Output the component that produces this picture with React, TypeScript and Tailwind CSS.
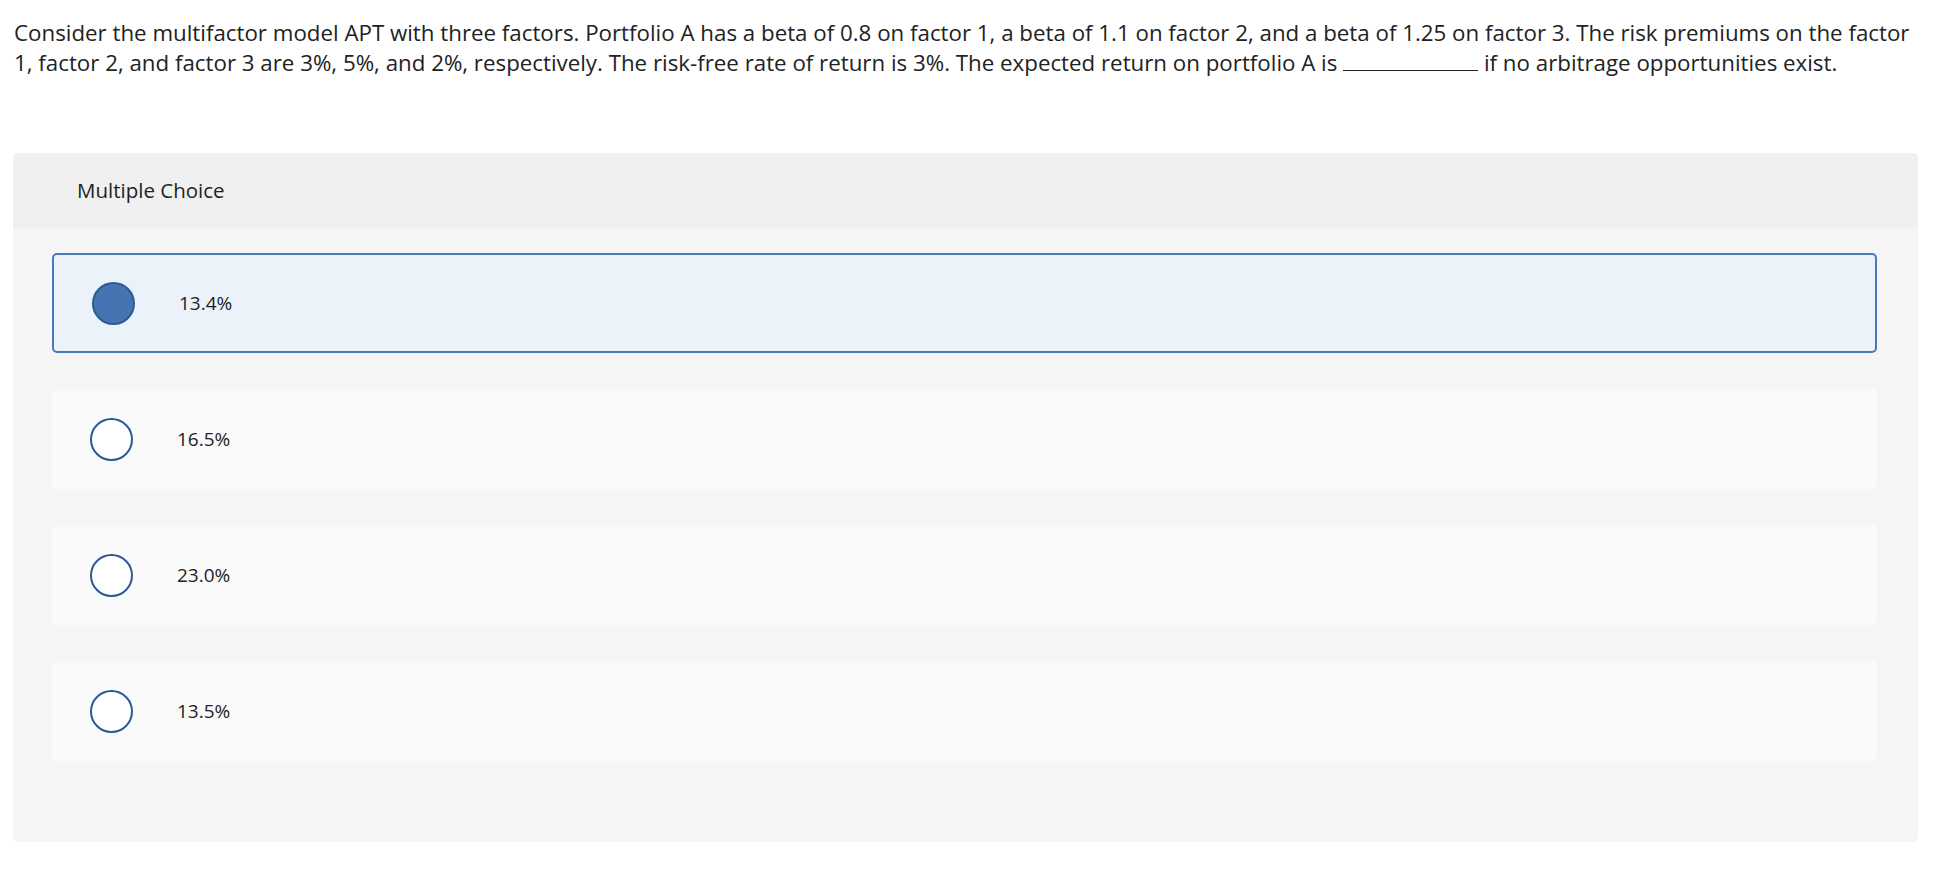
const options = [
  { label: "13.4%", selected: true },
  { label: "16.5%", selected: false },
  { label: "23.0%", selected: false },
  { label: "13.5%", selected: false },
]

function Radio({ checked }: { checked: boolean }) {
  return (
    <span
      className={
        "block h-[43px] w-[43px] shrink-0 rounded-full border-2 border-[#2c5b94] " +
        (checked ? "bg-[#4673b1]" : "bg-white")
      }
    />
  )
}

export default function App() {
  return (
    <div className="min-h-[878px] w-full bg-white text-[#222222]" style={{ fontFamily: "'Open Sans', 'Liberation Sans', sans-serif" }}>
      <p className="pl-[14px] pr-[22px] pt-[18px] text-[22.3px] leading-[30px]">
        Consider the multifactor model APT with three factors. Portfolio A has a beta of 0.8 on factor 1, a beta of 1.1 on
        factor 2, and a beta of 1.25 on factor 3. The risk premiums on the factor 1, factor 2, and factor 3 are 3%, 5%, and
        2%, respectively. The risk-free rate of return is 3%. The expected return on portfolio A is{" "}
        <span className="inline-block w-[135px] border-b border-[#222222]" /> if no arbitrage opportunities exist.
      </p>

      <div className="ml-[13px] mr-[24px] mt-[75px] overflow-hidden rounded-[5px] bg-[#f5f5f5]">
        <div className="flex h-[75px] items-center bg-[#f0f0f0] pl-[64px] text-[20.5px]">Multiple Choice</div>
        <div className="flex flex-col gap-[36px] pb-[81px] pl-[39px] pr-[41px] pt-[25px]">
          {options.map((o) => (
            <div
              key={o.label}
              className={
                "flex h-[100px] items-center gap-[44px] rounded-[5px] pl-[38px] text-[19px] " +
                (o.selected ? "border-2 border-[#4a78bd] bg-[#ebf2fa] pl-[36px]" : "bg-[#fafafa]")
              }
            >
              <Radio checked={o.selected} />
              <span>{o.label}</span>
            </div>
          ))}
        </div>
      </div>
    </div>
  )
}
